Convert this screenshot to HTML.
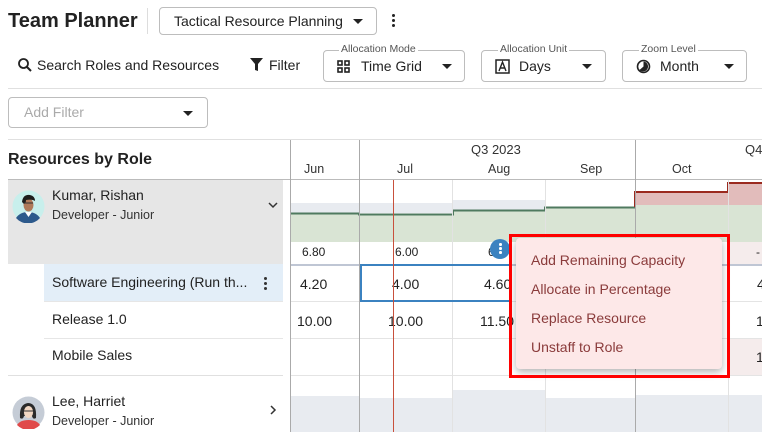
<!DOCTYPE html>
<html><head><style>
*{box-sizing:border-box;margin:0;padding:0}
body{width:762px;height:432px;overflow:hidden;background:#fff;font-family:"Liberation Sans",sans-serif;color:#222;position:relative}
.a{position:absolute}
.box{position:absolute;border:1px solid #bdbdbd;border-radius:4px;background:#fff}
.caret{position:absolute;width:0;height:0;border-left:5px solid transparent;border-right:5px solid transparent;border-top:5px solid #222}
.lbl{position:absolute;top:-8px;font-size:10.5px;color:#555;background:#fff;padding:0 2px}
.t14{font-size:14px}
.vl{position:absolute;top:140px;bottom:0;width:1px}
.num{position:absolute;font-size:14px;color:#222}
.mi{position:absolute;left:15px;font-size:14px;color:#8a3b3b}
</style></head><body>
<div class="a" style="left:8px;top:10px;font-size:20px;font-weight:bold;color:#222">Team Planner</div>
<div class="a" style="left:147px;top:8px;width:1px;height:26px;background:#ddd"></div>
<div class="box" style="left:159px;top:7px;width:218px;height:28px"><span class="a t14" style="left:14px;top:5px">Tactical Resource Planning</span><div class="caret" style="left:193px;top:11px"></div></div>
<div class="a" style="left:392px;top:14px;width:3px;height:3px;background:#222;border-radius:50%;box-shadow:0 5px 0 #222,0 10px 0 #222"></div>

<svg class="a" style="left:17px;top:57px" width="16" height="16" viewBox="0 0 16 16"><circle cx="6.5" cy="6.5" r="4.5" fill="none" stroke="#222" stroke-width="1.8"/><path d="M10 10l4 4" stroke="#222" stroke-width="2"/></svg>
<div class="a t14" style="left:37px;top:57px">Search Roles and Resources</div>
<svg class="a" style="left:250px;top:58px" width="13" height="14" viewBox="0 0 13 14"><path d="M0 0h13L8 6v7L5 12V6z" fill="#222"/></svg>
<div class="a t14" style="left:269px;top:57px">Filter</div>

<div class="box" style="left:323px;top:50px;width:142px;height:32px"><span class="lbl" style="left:15px">Allocation Mode</span>
<svg class="a" style="left:13px;top:9px" width="13" height="13" viewBox="0 0 13 13"><g fill="none" stroke="#222" stroke-width="1.6"><rect x="1" y="1" width="4" height="4"/><rect x="8" y="1" width="4" height="4"/><rect x="1" y="8" width="4" height="4"/><rect x="8" y="8" width="4" height="4"/></g></svg>
<span class="a t14" style="left:37px;top:7px">Time Grid</span><div class="caret" style="left:118px;top:13px"></div></div>
<div class="box" style="left:481px;top:50px;width:125px;height:32px"><span class="lbl" style="left:16px">Allocation Unit</span>
<svg class="a" style="left:13px;top:8px" width="15" height="15" viewBox="0 0 15 15"><rect x="1" y="1" width="13" height="13" fill="none" stroke="#222" stroke-width="1.5"/><path d="M4 12L7.5 3 11 12M5.2 9h4.6" fill="none" stroke="#222" stroke-width="1.4"/></svg>
<span class="a t14" style="left:37px;top:7px">Days</span><div class="caret" style="left:100px;top:13px"></div></div>
<div class="box" style="left:622px;top:50px;width:125px;height:32px"><span class="lbl" style="left:16px">Zoom Level</span>
<svg class="a" style="left:13px;top:8px" width="15" height="15" viewBox="0 0 15 15"><circle cx="7.5" cy="7.5" r="6" fill="none" stroke="#222" stroke-width="1.6"/><path d="M7.5 2.5A5 5 0 1 1 3.5 11L7.5 7.5z" fill="#222"/></svg>
<span class="a t14" style="left:37px;top:7px">Month</span><div class="caret" style="left:101px;top:13px"></div></div>
<div class="a" style="left:8px;top:88px;width:754px;height:1px;background:#e0e0e0"></div>
<div class="box" style="left:8px;top:97px;width:200px;height:31px"><span class="a t14" style="left:15px;top:6px;color:#aaa">Add Filter</span><div class="caret" style="left:174px;top:13px"></div></div>
<div class="a" style="left:8px;top:139px;width:754px;height:1px;background:#e0e0e0"></div>

<!-- left panel -->
<div class="a" style="left:8px;top:151px;font-size:16px;font-weight:bold">Resources by Role</div>
<div class="a" style="left:8px;top:179px;width:282px;height:1px;background:#bbb"></div>
<div class="a" style="left:8px;top:180px;width:275px;height:84px;background:#e6e6e6"></div>
<svg class="a" style="left:12px;top:190px" width="33" height="33" viewBox="0 0 33 33"><circle cx="16.5" cy="16.5" r="16" fill="#c8efec"/><path d="M4 28q4-6 12-6 8 0 12 6a16 16 0 0 1-24 0z" fill="#2d5a8c"/><path d="M13 22l3.5 5 3.5-5z" fill="#fff"/><ellipse cx="16.5" cy="15" rx="5" ry="6.5" fill="#b07a5a"/><path d="M10 12q1-8 8-7 5 1 5 6-3-2-9-1 0 3-2 4z" fill="#1d1d1d"/><path d="M12 13h9" stroke="#333" stroke-width="1"/></svg>
<div class="a t14" style="left:52px;top:187px">Kumar, Rishan</div>
<div class="a" style="left:52px;top:208px;font-size:12.5px;color:#333">Developer - Junior</div>
<svg class="a" style="left:268px;top:202px" width="10" height="7" viewBox="0 0 10 7"><path d="M1 1l4 4 4-4" fill="none" stroke="#333" stroke-width="1.5"/></svg>
<div class="a" style="left:44px;top:264px;width:239px;height:37px;background:#e3eef8"></div>
<div class="a t14" style="left:52px;top:274px">Software Engineering (Run th...</div>
<div class="a" style="left:264px;top:277px;width:3px;height:3px;background:#333;border-radius:50%;box-shadow:0 5px 0 #333,0 10px 0 #333"></div>
<div class="a" style="left:44px;top:301px;width:239px;height:1px;background:#e6e6e6"></div>
<div class="a t14" style="left:52px;top:311px">Release 1.0</div>
<div class="a" style="left:44px;top:338px;width:239px;height:1px;background:#e6e6e6"></div>
<div class="a t14" style="left:52px;top:347px">Mobile Sales</div>
<div class="a" style="left:8px;top:375px;width:275px;height:1px;background:#e0e0e0"></div>
<svg class="a" style="left:12px;top:396px" width="33" height="33" viewBox="0 0 33 33"><circle cx="16.5" cy="16.5" r="16" fill="#c5ccd6"/><path d="M5 29q3-5 11.5-5 8.5 0 11.5 5a16 16 0 0 1-23 0z" fill="#e04a4a"/><path d="M8 22q-1-14 8-15 9 0 8 15-3 2-4-2h-8q-1 4-4 2z" fill="#2a2a2a"/><ellipse cx="16.5" cy="16" rx="4.6" ry="6" fill="#f1d7c3"/><path d="M12 15h9" stroke="#333" stroke-width="1"/></svg>
<div class="a t14" style="left:52px;top:393px">Lee, Harriet</div>
<div class="a" style="left:52px;top:414px;font-size:12.5px;color:#333">Developer - Junior</div>
<svg class="a" style="left:270px;top:405px" width="7" height="10" viewBox="0 0 7 10"><path d="M1 1l4 4-4 4" fill="none" stroke="#333" stroke-width="1.5"/></svg>

<!-- grid header -->
<div class="a" style="left:471px;top:142px;font-size:13px;color:#333">Q3 2023</div>
<div class="a" style="left:745px;top:142px;font-size:13px;color:#333">Q4</div>
<div class="a" style="left:304px;top:162px;font-size:12.5px;color:#333">Jun</div>
<div class="a" style="left:397px;top:162px;font-size:12.5px;color:#333">Jul</div>
<div class="a" style="left:488px;top:162px;font-size:12.5px;color:#333">Aug</div>
<div class="a" style="left:580px;top:162px;font-size:12.5px;color:#333">Sep</div>
<div class="a" style="left:672px;top:162px;font-size:12.5px;color:#333">Oct</div>
<div class="a" style="left:290px;top:179px;width:472px;height:1px;background:#bbb"></div>

<!-- chart -->
<div class="a" style="left:291px;top:203px;width:162px;height:10px;background:#e8ebf0"></div>
<div class="a" style="left:453px;top:200px;width:92px;height:10px;background:#e8ebf0"></div>
<svg class="a" style="left:291px;top:180px" width="471" height="62" viewBox="291 180 471 62">
<path d="M291 213H359V214.5H453V210H545V207H635V242H291z" fill="#d9e4d4"/>
<path d="M635 205H762V242H635z" fill="#d9e4d4"/>
<path d="M635 192H728V183H762V205H635z" fill="#e2bcbb"/>
<path d="M291 213.5H359V214.5H453V210.5H545V207.5H635" fill="none" stroke="#4f7a5f" stroke-width="2"/>
<path d="M635 207V192H728V183H762" fill="none" stroke="#9b2a1f" stroke-width="2"/>
</svg>

<div class="a" style="left:291px;top:264px;width:471px;height:2px;background:#bfc6d4"></div>
<div class="a" style="left:291px;top:301px;width:471px;height:1px;background:#e4e4e4"></div>
<div class="a" style="left:291px;top:338px;width:471px;height:1px;background:#e4e4e4"></div>
<div class="a" style="left:291px;top:375px;width:471px;height:1px;background:#e4e4e4"></div>
<div class="a" style="left:728px;top:242px;width:34px;height:22px;background:#f5ecec"></div>
<div class="a" style="left:728px;top:339px;width:34px;height:36px;background:#f5ecec"></div>
<div class="a" style="left:291px;top:396px;width:68px;height:36px;background:#e8ebf0"></div>
<div class="a" style="left:359px;top:398px;width:94px;height:34px;background:#e8ebf0"></div>
<div class="a" style="left:453px;top:390px;width:92px;height:42px;background:#e8ebf0"></div>
<div class="a" style="left:545px;top:398px;width:90px;height:34px;background:#e8ebf0"></div>
<div class="a" style="left:635px;top:395px;width:127px;height:37px;background:#e8ebf0"></div>

<div class="vl" style="left:290px;background:#aaa"></div>
<div class="vl" style="left:359px;background:#aaa"></div>
<div class="vl" style="left:452px;top:180px;background:#e2e2e2"></div>
<div class="vl" style="left:545px;top:180px;background:#e2e2e2"></div>
<div class="vl" style="left:635px;background:#aaa"></div>
<div class="vl" style="left:728px;top:180px;background:#e2e2e2"></div>
<div class="a" style="left:360px;top:264px;width:152px;height:38px;border:2px solid #3b82c0;border-right:none"></div>

<div class="num" style="left:302px;top:245px;font-size:12px">6.80</div>
<div class="num" style="left:395px;top:245px;font-size:12px">6.00</div>
<div class="num" style="left:488px;top:245px;font-size:12px">6.</div>
<div class="num" style="left:300px;top:276px">4.20</div>
<div class="num" style="left:392px;top:276px">4.00</div>
<div class="num" style="left:484px;top:276px">4.60</div>
<div class="num" style="left:297px;top:313px">10.00</div>
<div class="num" style="left:388px;top:313px">10.00</div>
<div class="num" style="left:480px;top:313px">11.50</div>
<div class="num" style="left:756px;top:245px;font-size:12px">-</div>
<div class="num" style="left:757px;top:276px">4</div>
<div class="num" style="left:756px;top:313px">1</div>
<div class="num" style="left:756px;top:349px">1</div>
<div class="a" style="left:393px;top:180px;width:1px;height:252px;background:#c8503c"></div>
<div class="a" style="left:490px;top:239px;width:20px;height:20px;border-radius:50%;background:#3b82c0"></div>
<div class="a" style="left:499px;top:243px;width:2.5px;height:2.5px;background:#fff;border-radius:50%;box-shadow:0 4px 0 #fff,0 8px 0 #fff"></div>

<!-- menu -->
<div class="a" style="left:516px;top:238px;width:206px;height:131px;background:#fde8e8;border-radius:4px;box-shadow:0 3px 8px rgba(0,0,0,.3)">
<div class="mi" style="top:14px">Add Remaining Capacity</div>
<div class="mi" style="top:43px">Allocate in Percentage</div>
<div class="mi" style="top:72px">Replace Resource</div>
<div class="mi" style="top:101px">Unstaff to Role</div>
</div>
<div class="a" style="left:509px;top:234px;width:221px;height:144px;border:3px solid #ff0000"></div>
</body></html>
